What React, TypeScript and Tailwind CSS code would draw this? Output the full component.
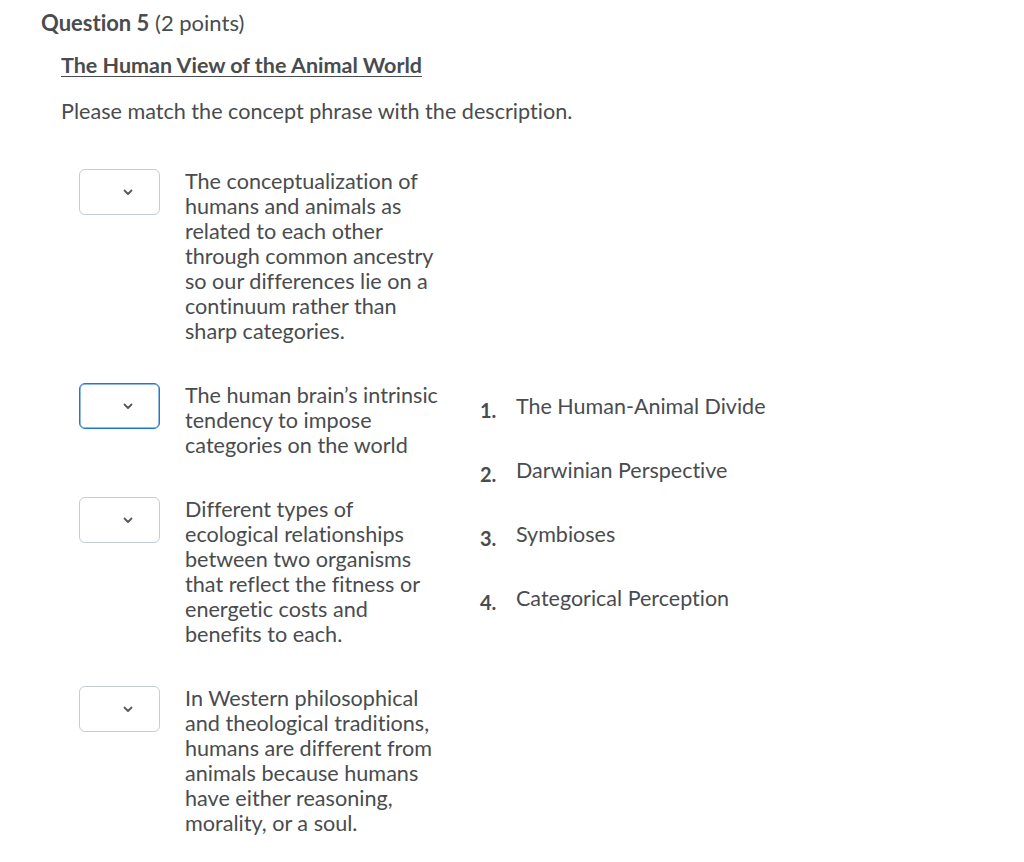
import React from "react";

const rows = [
  "The conceptualization of humans and animals as related to each other through common ancestry so our differences lie on a continuum rather than sharp categories.",
  "The human brain\u2019s intrinsic tendency to impose categories on the world",
  "Different types of ecological relationships between two organisms that reflect the fitness or energetic costs and benefits to each.",
  "In Western philosophical and theological traditions, humans are different from animals because humans have either reasoning, morality, or a soul.",
];

const choices = [
  "The Human-Animal Divide",
  "Darwinian Perspective",
  "Symbioses",
  "Categorical Perception",
];

function Select({ focused }: { focused?: boolean }) {
  return (
    <div
      className={
        "w-[81px] h-[46px] shrink-0 rounded-[6px] bg-white border flex items-center justify-end pr-[26px] " +
        (focused ? "border-[#1f78c9] shadow-[inset_0_0_0_0.5px_#1f78c9]" : "border-[#c5ccd3]")
      }
    >
      <svg width="10" height="7" viewBox="0 0 10 7" fill="none">
        <path d="M1.5 1.5 L5 5 L8.5 1.5" stroke="#565a5c" strokeWidth="1.8" strokeLinecap="round" strokeLinejoin="round" />
      </svg>
    </div>
  );
}

export default function App() {
  return (
    <div className="min-h-[862px] bg-white text-[#494c4e] font-['Lato',sans-serif] [font-variant-ligatures:none] pl-[41px] pt-[8px]">
      <div className="text-[22px] leading-[30px]">
        <span className="font-bold">Question 5</span> (2 points)
      </div>
      <div className="pl-[20px]">
        <div className="mt-[13px] text-[21.5px] leading-[28px] font-bold underline underline-offset-[3px] decoration-[1px]">
          The Human View of the Animal World
        </div>
        <div className="mt-[18px] text-[21.6px] leading-[28px]">
          Please match the concept phrase with the description.
        </div>
        <div className="mt-[44px] flex items-center pl-[18px]">
          <div className="flex flex-col gap-[39px]">
            {rows.map((t, i) => (
              <div key={i} className="flex items-start">
                <Select focused={i === 1} />
                <div className="ml-[25px] w-[262px] text-[21.6px] leading-[25px]">{t}</div>
              </div>
            ))}
          </div>
          <div className="ml-[33px] flex flex-col">
            {choices.map((c, i) => (
              <div key={i} className="h-[64px] flex items-center">
                <span className="w-[36px] font-bold text-[20px] leading-[25px] translate-y-[4px]">{i + 1}.</span>
                <span className="text-[21.5px] leading-[25px]">{c}</span>
              </div>
            ))}
          </div>
        </div>
      </div>
    </div>
  );
}
